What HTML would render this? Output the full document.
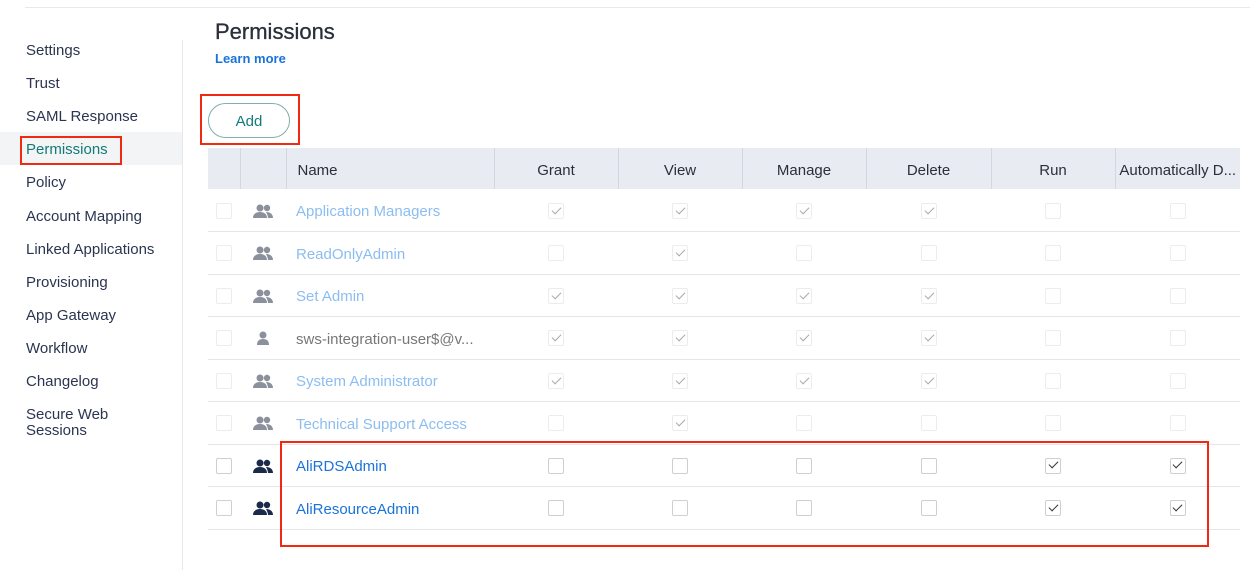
<!DOCTYPE html>
<html><head><meta charset="utf-8"><style>
*{margin:0;padding:0;box-sizing:border-box}
body{width:1250px;height:570px;background:#fff;font-family:"Liberation Sans",sans-serif;position:relative;overflow:hidden;color:#2b2f3a}
.topline{position:absolute;left:25px;top:7px;width:1225px;height:1px;background:#e6e8ec}
.side{position:absolute;left:26px;font-size:15px;color:#2b3550}
.divider{position:absolute;left:182px;top:40px;width:1px;height:530px;background:#e6e8ec}
.selbg{position:absolute;left:0;top:132px;width:182px;height:33px;background:#f3f4f6}
.red{position:absolute;border:2px solid #f02a12}
h1{position:absolute;left:215px;top:19px;font-size:22px;font-weight:normal;color:#2b2f3a;-webkit-text-stroke:.3px #2b2f3a}
.learn{position:absolute;left:215px;top:51px;font-size:13px;font-weight:bold;color:#1a73d9}
.add{position:absolute;left:208px;top:103px;width:82px;height:35px;border:1px solid #7fb0ad;border-radius:18px;color:#137a78;font-size:15px;text-align:center;line-height:36px}
table{position:absolute;left:208px;top:148px;border-collapse:collapse;table-layout:fixed;width:1032px}
th{background:#e9ebf2;height:41px;padding-top:3px;font-weight:normal;font-size:15px;color:#2b2f3a;border-left:1px solid #d4d7df;white-space:nowrap;overflow:hidden}
th:first-child{border-left:none}
th.n{text-align:left;padding-left:11px}
td{height:42.5px;border-bottom:1px solid #e4e6ea;text-align:center;font-size:15px}
td.n{text-align:left;padding-left:10px;padding-top:3px}
.cb{display:inline-block;width:16px;height:16px;border:1px solid #ececec;border-radius:2px;vertical-align:middle;position:relative;background:#fff}
.a .cb{border-color:#cfcfcf;border-width:1.5px}
.ck::after{content:"";position:absolute;left:5px;top:1px;width:4px;height:8px;border:solid #a9a9a9;border-width:0 1.5px 1.5px 0;transform:rotate(45deg)}
.a .ck::after{border-color:#333;left:4.5px;top:0.5px}
.f .nm{color:#8cbdf0}
.a .nm{color:#1a73d9}
.g .nm{color:#777}
svg{vertical-align:middle}
</style></head><body>
<div class="topline"></div>
<div class="selbg"></div>
<div class="divider"></div>
<div class="side" style="top:42px">Settings</div>
<div class="side" style="top:75px">Trust</div>
<div class="side" style="top:108px">SAML Response</div>
<div class="side" style="top:141px;color:#137a78">Permissions</div>
<div class="side" style="top:174px">Policy</div>
<div class="side" style="top:208px">Account Mapping</div>
<div class="side" style="top:241px">Linked Applications</div>
<div class="side" style="top:274px">Provisioning</div>
<div class="side" style="top:307px">App Gateway</div>
<div class="side" style="top:340px">Workflow</div>
<div class="side" style="top:373px">Changelog</div>
<div class="side" style="top:407px;line-height:16px">Secure Web<br>Sessions</div>
<h1>Permissions</h1>
<div class="learn">Learn more</div>
<div class="add">Add</div>
<table>
<colgroup><col style="width:32px"><col style="width:46px"><col style="width:208px"><col style="width:124px"><col style="width:124px"><col style="width:124px"><col style="width:125px"><col style="width:124px"><col style="width:125px"></colgroup>
<tr><th></th><th></th><th class="n">Name</th><th>Grant</th><th>View</th><th>Manage</th><th>Delete</th><th>Run</th><th>Automatically D...</th></tr>
<tr class="f"><td><span class="cb"></span></td><td><svg width="22" height="16" viewBox="0 0 22 16"><g fill="#8a909c"><circle cx="8" cy="5" r="3.5"/><circle cx="15" cy="5" r="3.2"/><path d="M1 15c0-4 3-6 7-6s7 2 7 6z"/><path d="M14 9c4 0 7 2 7 6h-5c0-2-1-4-2-6z"/></g></svg></td><td class="n"><span class="nm">Application Managers</span></td><td><span class="cb ck"></span></td><td><span class="cb ck"></span></td><td><span class="cb ck"></span></td><td><span class="cb ck"></span></td><td><span class="cb"></span></td><td><span class="cb"></span></td></tr>
<tr class="f"><td><span class="cb"></span></td><td><svg width="22" height="16" viewBox="0 0 22 16"><g fill="#8a909c"><circle cx="8" cy="5" r="3.5"/><circle cx="15" cy="5" r="3.2"/><path d="M1 15c0-4 3-6 7-6s7 2 7 6z"/><path d="M14 9c4 0 7 2 7 6h-5c0-2-1-4-2-6z"/></g></svg></td><td class="n"><span class="nm">ReadOnlyAdmin</span></td><td><span class="cb"></span></td><td><span class="cb ck"></span></td><td><span class="cb"></span></td><td><span class="cb"></span></td><td><span class="cb"></span></td><td><span class="cb"></span></td></tr>
<tr class="f"><td><span class="cb"></span></td><td><svg width="22" height="16" viewBox="0 0 22 16"><g fill="#8a909c"><circle cx="8" cy="5" r="3.5"/><circle cx="15" cy="5" r="3.2"/><path d="M1 15c0-4 3-6 7-6s7 2 7 6z"/><path d="M14 9c4 0 7 2 7 6h-5c0-2-1-4-2-6z"/></g></svg></td><td class="n"><span class="nm">Set Admin</span></td><td><span class="cb ck"></span></td><td><span class="cb ck"></span></td><td><span class="cb ck"></span></td><td><span class="cb ck"></span></td><td><span class="cb"></span></td><td><span class="cb"></span></td></tr>
<tr class="f g"><td><span class="cb"></span></td><td><svg width="22" height="16" viewBox="0 0 22 16"><g fill="#8a909c"><circle cx="11" cy="5" r="3.5"/><path d="M5 15c0-4 2-6 6-6s6 2 6 6z"/></g></svg></td><td class="n"><span class="nm">sws-integration-user$@v...</span></td><td><span class="cb ck"></span></td><td><span class="cb ck"></span></td><td><span class="cb ck"></span></td><td><span class="cb ck"></span></td><td><span class="cb"></span></td><td><span class="cb"></span></td></tr>
<tr class="f"><td><span class="cb"></span></td><td><svg width="22" height="16" viewBox="0 0 22 16"><g fill="#8a909c"><circle cx="8" cy="5" r="3.5"/><circle cx="15" cy="5" r="3.2"/><path d="M1 15c0-4 3-6 7-6s7 2 7 6z"/><path d="M14 9c4 0 7 2 7 6h-5c0-2-1-4-2-6z"/></g></svg></td><td class="n"><span class="nm">System Administrator</span></td><td><span class="cb ck"></span></td><td><span class="cb ck"></span></td><td><span class="cb ck"></span></td><td><span class="cb ck"></span></td><td><span class="cb"></span></td><td><span class="cb"></span></td></tr>
<tr class="f"><td><span class="cb"></span></td><td><svg width="22" height="16" viewBox="0 0 22 16"><g fill="#8a909c"><circle cx="8" cy="5" r="3.5"/><circle cx="15" cy="5" r="3.2"/><path d="M1 15c0-4 3-6 7-6s7 2 7 6z"/><path d="M14 9c4 0 7 2 7 6h-5c0-2-1-4-2-6z"/></g></svg></td><td class="n"><span class="nm">Technical Support Access</span></td><td><span class="cb"></span></td><td><span class="cb ck"></span></td><td><span class="cb"></span></td><td><span class="cb"></span></td><td><span class="cb"></span></td><td><span class="cb"></span></td></tr>
<tr class="a"><td><span class="cb"></span></td><td><svg width="22" height="16" viewBox="0 0 22 16"><g fill="#1b2a4a"><circle cx="8" cy="5" r="3.5"/><circle cx="15" cy="5" r="3.2"/><path d="M1 15c0-4 3-6 7-6s7 2 7 6z"/><path d="M14 9c4 0 7 2 7 6h-5c0-2-1-4-2-6z"/></g></svg></td><td class="n"><span class="nm">AliRDSAdmin</span></td><td><span class="cb"></span></td><td><span class="cb"></span></td><td><span class="cb"></span></td><td><span class="cb"></span></td><td><span class="cb ck"></span></td><td><span class="cb ck"></span></td></tr>
<tr class="a"><td><span class="cb"></span></td><td><svg width="22" height="16" viewBox="0 0 22 16"><g fill="#1b2a4a"><circle cx="8" cy="5" r="3.5"/><circle cx="15" cy="5" r="3.2"/><path d="M1 15c0-4 3-6 7-6s7 2 7 6z"/><path d="M14 9c4 0 7 2 7 6h-5c0-2-1-4-2-6z"/></g></svg></td><td class="n"><span class="nm">AliResourceAdmin</span></td><td><span class="cb"></span></td><td><span class="cb"></span></td><td><span class="cb"></span></td><td><span class="cb"></span></td><td><span class="cb ck"></span></td><td><span class="cb ck"></span></td></tr>
</table>
<div class="red" style="left:20px;top:136px;width:102px;height:29px"></div>
<div class="red" style="left:200px;top:94px;width:100px;height:51px"></div>
<div class="red" style="left:280px;top:441px;width:929px;height:106px"></div>
</body></html>
